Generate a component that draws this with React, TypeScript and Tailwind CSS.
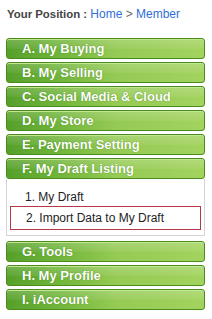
const bars = [
  "A. My Buying",
  "B. My Selling",
  "C. Social Media & Cloud",
  "D. My Store",
  "E. Payment Setting",
  "F. My Draft Listing",
];

const barsAfter = ["G. Tools", "H. My Profile", "I. iAccount"];

function Bar({ label }: { label: string }) {
  return (
    <div className="relative h-[21px] overflow-hidden rounded-[3px] border border-[#4b8d1c] bg-[linear-gradient(90deg,#56a02a_0%,#6fb43a_25%,#95ca54_55%,#a2d35f_100%)] shadow-[inset_0_1px_0_#b7e27a]">
      <div className="absolute inset-x-0 top-0 h-1/2 bg-[linear-gradient(180deg,rgba(255,255,255,0.18),rgba(255,255,255,0.05))]" />
      <span className="relative block pl-[15px] text-[13px] font-bold leading-[19px] text-white [text-shadow:0_0_1px_#3d7a12]">
        {label}
      </span>
    </div>
  );
}

export default function App() {
  return (
    <div className="w-[212px] h-[319px] bg-white font-['Liberation_Sans',Arial,sans-serif]">
      <div className="pl-[7px] pt-[6px] text-[12px] leading-[16px]">
        <span className="text-[11.4px] font-bold text-[#444]">Your Position : </span>
        <a className="text-[#2f6fd6]">Home</a>
        <span className="text-[#666]"> &gt; </span>
        <a className="text-[#2f6fd6]">Member</a>
      </div>

      <div className="ml-[6px] mt-[16px] flex w-[199px] flex-col gap-[3px]">
        {bars.map((b) => (
          <Bar key={b} label={b} />
        ))}
        <div className="-mt-[3px] mb-[2px] border border-t-0 border-[#d4d4d4] px-[3px] pb-[5px] pt-[10px] text-[12px] text-[#222]">
          <div className="pl-[15px] leading-[16px]">1. My Draft</div>
          <div className="mt-[1px] border border-[#b23a48] pl-[15px] leading-[22px]">
            2. Import Data to My Draft
          </div>
        </div>
        {barsAfter.map((b) => (
          <Bar key={b} label={b} />
        ))}
      </div>
    </div>
  );
}
